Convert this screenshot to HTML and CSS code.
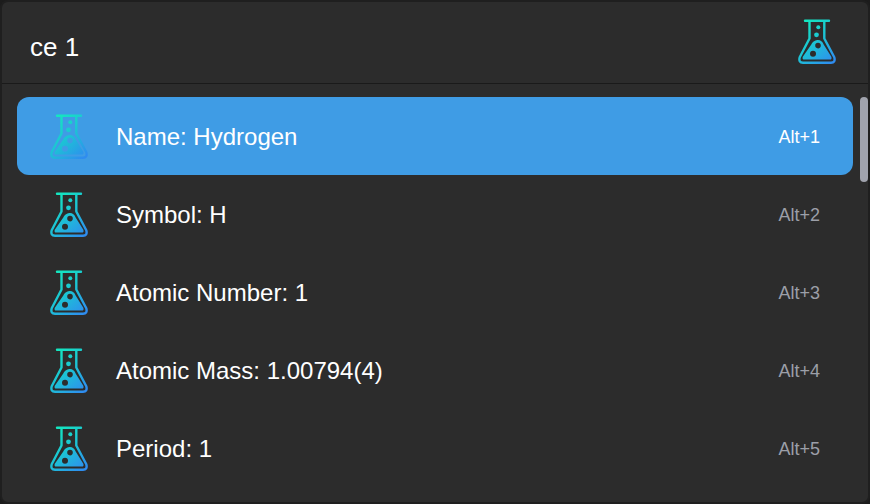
FILE: index.html
```html
<!DOCTYPE html>
<html lang="en">
<head>
<meta charset="utf-8">
<title>Wox</title>
<link rel="stylesheet" href="styles.css">
</head>
<body>
<svg class="defs" width="0" height="0" aria-hidden="true">
  <defs>
    <linearGradient id="flask" gradientUnits="userSpaceOnUse" x1="4" y1="6" x2="36" y2="42">
      <stop offset="0" stop-color="#14e6c0"/>
      <stop offset="0.45" stop-color="#1cc4d4"/>
      <stop offset="1" stop-color="#2f8cf0"/>
    </linearGradient>
    <symbol id="flask-icon" viewBox="0 0 38 45">
      <path fill="none" stroke="url(#flask)" stroke-width="2.400" stroke-linecap="round" stroke-linejoin="round" d="M7 1.800H31M11.500 1.800V19.500L1.700 38.300Q0.300 43.600 5 43.700H33Q37.700 43.600 36.300 38.300L26.300 19.500V1.800"/>
      <path fill="url(#flask)" fill-rule="evenodd" d="M4.800 37.800L13.300 25.600C15 22 18 21 20 21C22.500 21 24.700 23 25.500 25.200L33.300 37.800Q34.300 40.600 31.800 40.600H6.300Q3.800 40.600 4.800 37.800ZM20 23.800A2.800 2.800 0 1 0 20.010 29.400A2.800 2.800 0 1 0 20 23.800ZM15 31.700A3 3 0 1 0 15.010 37.700A3 3 0 1 0 15 31.700Z"/>
      <circle cx="20.300" cy="8.300" r="2" fill="url(#flask)"/>
      <circle cx="18.500" cy="15.800" r="2.400" fill="url(#flask)"/>
    </symbol>
  </defs>
</svg>
<main class="window">
  <header class="query">
    <span class="query-text">ce 1</span>
    <svg class="flask flask-head"><use href="#flask-icon"/></svg>
  </header>
  <div class="body">
    <ul class="results">
      <li class="row row-active">
        <svg class="flask"><use href="#flask-icon"/></svg>
        <span class="title">Name: Hydrogen</span>
        <span class="hotkey">Alt+1</span>
      </li>
      <li class="row">
        <svg class="flask"><use href="#flask-icon"/></svg>
        <span class="title">Symbol: H</span>
        <span class="hotkey">Alt+2</span>
      </li>
      <li class="row">
        <svg class="flask"><use href="#flask-icon"/></svg>
        <span class="title">Atomic Number: 1</span>
        <span class="hotkey">Alt+3</span>
      </li>
      <li class="row">
        <svg class="flask"><use href="#flask-icon"/></svg>
        <span class="title">Atomic Mass: 1.00794(4)</span>
        <span class="hotkey">Alt+4</span>
      </li>
      <li class="row">
        <svg class="flask"><use href="#flask-icon"/></svg>
        <span class="title">Period: 1</span>
        <span class="hotkey">Alt+5</span>
      </li>
    </ul>
    <div class="scrollbar"></div>
  </div>
</main>
</body>
</html>
```
FILE: styles.css
```css
* {
  box-sizing: border-box;
}

html,
body {
  margin: 0;
  height: 100%;
  background: #1c1c1c;
  overflow: hidden;
}

.defs {
  position: absolute;
}

.window {
  display: flex;
  flex-direction: column;
  width: 870px;
  height: 504px;
  background: #2c2c2c;
  border: 2px solid #1f1f1f;
  border-radius: 8px;
  font-family: "Liberation Sans", Arial, sans-serif;
  color: #fff;
}

.query {
  display: flex;
  align-items: center;
  justify-content: space-between;
  flex: none;
  height: 82px;
  padding: 0 32px 0 28px;
  border-bottom: 1px solid #1a1a1a;
}

.query-text {
  font-size: 26px;
  line-height: 30px;
  padding-top: 8px;
}

.flask {
  display: block;
  flex: none;
  width: 38px;
  height: 45px;
}

.flask-head {
  margin-top: -2px;
}

.body {
  display: flex;
  flex: 1;
  padding-top: 13px;
}

.results {
  flex: none;
  width: 836px;
  margin: 0 0 0 15px;
  padding: 0;
  list-style: none;
}

.row {
  display: flex;
  align-items: center;
  height: 78px;
  padding: 0 33px 0 33px;
  border-radius: 12px;
}

.row-active {
  background: #3f9ce5;
}

.title {
  flex: 1;
  margin-left: 28px;
  padding-top: 2px;
  font-size: 24px;
  line-height: 28px;
}

.hotkey {
  padding-top: 2px;
  font-size: 18px;
  line-height: 22px;
  color: #9c9fa8;
}

.row-active .hotkey {
  color: #fff;
}

.scrollbar {
  flex: none;
  width: 8px;
  height: 85px;
  margin-left: 7px;
  background: #a0a3ad;
  border-radius: 4px;
}
```
